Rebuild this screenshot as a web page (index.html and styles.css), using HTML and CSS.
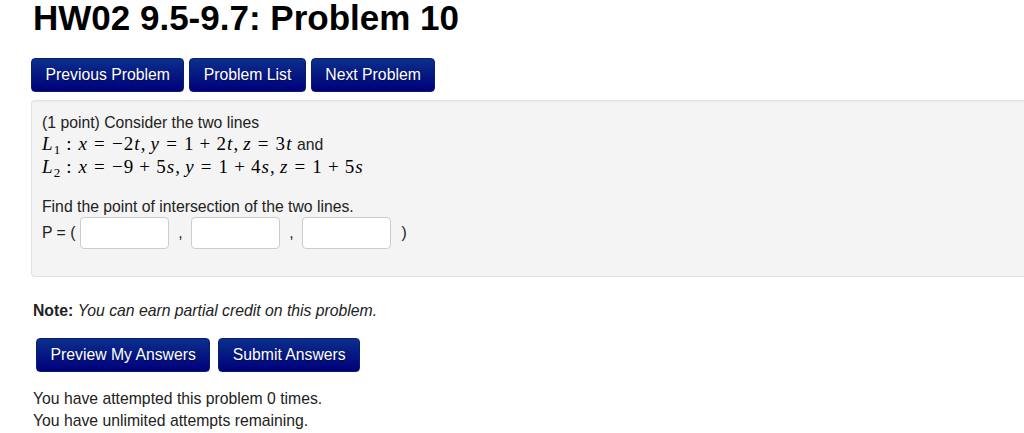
FILE: index.html
```html
<!DOCTYPE html>
<html>
<head>
<meta charset="utf-8">
<link rel="stylesheet" href="styles.css">
</head>
<body>
<div class="page">
  <h1 class="title">HW02 9.5-9.7: Problem 10</h1>
  <div class="nav">
    <button class="btn">Previous Problem</button>
    <button class="btn">Problem List</button>
    <button class="btn">Next Problem</button>
  </div>
  <div class="well">
    <div class="line">(1 point) Consider the two lines</div>
    <div class="line mline"><span class="m"><i>L</i><sub>1</sub><span class="rel">:</span><i>x</i><span class="rel">=</span>−2<i>t</i><span class="pun">,</span><i>y</i><span class="rel">=</span>1<span class="bin">+</span>2<i>t</i><span class="pun">,</span><i>z</i><span class="rel">=</span>3<i>t</i></span> and</div>
    <div class="line mline"><span class="m"><i>L</i><sub>2</sub><span class="rel">:</span><i>x</i><span class="rel">=</span>−9<span class="bin">+</span>5<i>s</i><span class="pun">,</span><i>y</i><span class="rel">=</span>1<span class="bin">+</span>4<i>s</i><span class="pun">,</span><i>z</i><span class="rel">=</span>1<span class="bin">+</span>5<i>s</i></span></div>
    <div class="line find">Find the point of intersection of the two lines.</div>
    <div class="answer">
      <span>P = (</span>
      <input class="field" type="text">
      <span class="comma">,</span>
      <input class="field" type="text">
      <span class="comma">,</span>
      <input class="field" type="text">
      <span class="close">)</span>
    </div>
  </div>
  <p class="note"><b>Note:</b> <i>You can earn partial credit on this problem.</i></p>
  <div class="submit">
    <button class="btn">Preview My Answers</button>
    <button class="btn">Submit Answers</button>
  </div>
  <div class="attempts">
    <div>You have attempted this problem 0 times.</div>
    <div>You have unlimited attempts remaining.</div>
  </div>
</div>
</body>
</html>
```

FILE: styles.css
```css
html, body {
  margin: 0;
  padding: 0;
  background: #fff;
}
body {
  font-family: "Liberation Sans", Arial, sans-serif;
  font-size: 15.75px;
  color: #222;
  overflow: hidden;
}
.page {
  padding-left: 31px;
}
.title {
  margin: 0 0 0 2px;
  font-size: 35px;
  line-height: 35px;
  font-weight: bold;
  color: #000;
}
.nav {
  display: flex;
  gap: 5px;
  margin-top: 23px;
}
.btn {
  font-family: "Liberation Sans", Arial, sans-serif;
  font-size: 15.75px;
  line-height: 20px;
  padding: 6px 13.5px;
  color: #fff;
  background: linear-gradient(#0b2f8c, #00007a);
  border: 1px solid #0a1f6a;
  border-radius: 4px;
  text-shadow: 0 1px 1px rgba(0,0,0,0.4);
}
.well {
  margin-top: 8px;
  background: #f4f4f4;
  border: 1px solid #e2e2e2;
  border-right: none;
  border-radius: 4px 0 0 4px;
  padding: 11px 10px 0 10px;
  height: 177px;
  box-sizing: border-box;
  box-shadow: inset 0 1px 1px rgba(0,0,0,0.04);
}
.line {
  line-height: 21px;
}
.mline {
  line-height: 21.5px;
}
.m {
  font-family: "Liberation Serif", "Times New Roman", serif;
  font-size: 19px;
  letter-spacing: 1.1px;
  color: #000;
}
.m i {
  font-style: italic;
}
.m sub {
  font-size: 13px;
  vertical-align: -4px;
  line-height: 0;
  letter-spacing: 0;
}
.rel {
  margin: 0 6px;
}
.bin {
  margin: 0 5px;
}
.pun {
  margin-right: 4px;
}
.find {
  margin-top: 18px;
}
.answer {
  display: flex;
  align-items: center;
  margin-top: 0;
}
.field {
  width: 89px;
  height: 32px;
  box-sizing: border-box;
  margin: 0 0 0 5px;
  border: 1px solid #ccc;
  border-radius: 4px;
  background: #fff;
}
.comma {
  width: 22px;
  text-align: center;
  margin-right: -5px;
}
.close {
  margin-left: 10px;
}
.note {
  margin: 24px 0 0 2px;
  line-height: 20px;
  color: #222;
}
.submit {
  display: flex;
  gap: 8px;
  margin: 17px 0 0 5px;
}
.attempts {
  margin: 16px 0 0 2px;
  line-height: 22px;
}
```
